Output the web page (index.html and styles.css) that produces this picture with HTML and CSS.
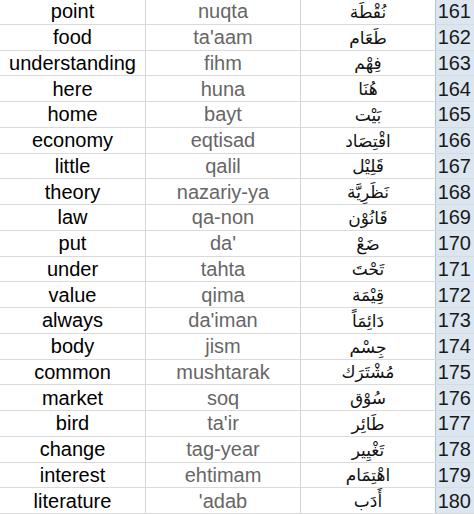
FILE: index.html
```html
<!DOCTYPE html>
<html>
<head>
<meta charset="utf-8">
<link rel="stylesheet" href="styles.css">
</head>
<body>
<div class="sheet">
  <div class="row"><div class="en">point</div><div class="tr">nuqta</div><div class="ar">نُقْطَة</div><div class="num">161</div></div>
  <div class="row"><div class="en">food</div><div class="tr">ta'aam</div><div class="ar">طَعَام</div><div class="num">162</div></div>
  <div class="row"><div class="en">understanding</div><div class="tr">fihm</div><div class="ar">فِهْم</div><div class="num">163</div></div>
  <div class="row"><div class="en">here</div><div class="tr">huna</div><div class="ar">هُنَا</div><div class="num">164</div></div>
  <div class="row"><div class="en">home</div><div class="tr">bayt</div><div class="ar">بَيْت</div><div class="num">165</div></div>
  <div class="row"><div class="en">economy</div><div class="tr">eqtisad</div><div class="ar">اقْتِصَاد</div><div class="num">166</div></div>
  <div class="row"><div class="en">little</div><div class="tr">qalil</div><div class="ar">قَلِيْل</div><div class="num">167</div></div>
  <div class="row"><div class="en">theory</div><div class="tr">nazariy-ya</div><div class="ar">نَظَرِيَّة</div><div class="num">168</div></div>
  <div class="row"><div class="en">law</div><div class="tr">qa-non</div><div class="ar">قَانُوْن</div><div class="num">169</div></div>
  <div class="row"><div class="en">put</div><div class="tr">da'</div><div class="ar">ضَعْ</div><div class="num">170</div></div>
  <div class="row"><div class="en">under</div><div class="tr">tahta</div><div class="ar">تَحْتَ</div><div class="num">171</div></div>
  <div class="row"><div class="en">value</div><div class="tr">qima</div><div class="ar">قِيْمَة</div><div class="num">172</div></div>
  <div class="row"><div class="en">always</div><div class="tr">da'iman</div><div class="ar">دَائِمَاً</div><div class="num">173</div></div>
  <div class="row"><div class="en">body</div><div class="tr">jism</div><div class="ar">جِسْم</div><div class="num">174</div></div>
  <div class="row"><div class="en">common</div><div class="tr">mushtarak</div><div class="ar">مُشْتَرَك</div><div class="num">175</div></div>
  <div class="row"><div class="en">market</div><div class="tr">soq</div><div class="ar">سُوْق</div><div class="num">176</div></div>
  <div class="row"><div class="en">bird</div><div class="tr">ta'ir</div><div class="ar">طَائِر</div><div class="num">177</div></div>
  <div class="row"><div class="en">change</div><div class="tr">tag-year</div><div class="ar">تَغْيِير</div><div class="num">178</div></div>
  <div class="row"><div class="en">interest</div><div class="tr">ehtimam</div><div class="ar">اهْتِمَام</div><div class="num">179</div></div>
  <div class="row"><div class="en">literature</div><div class="tr">'adab</div><div class="ar">أَدَب</div><div class="num">180</div></div>
</div>
</body>
</html>
```
FILE: styles.css
```css
html, body {
  margin: 0;
  padding: 0;
  background: #ffffff;
  overflow: hidden;
}
.sheet {
  margin-top: -1px;
  display: flex;
  flex-direction: column;
  font-family: "Liberation Sans", Arial, sans-serif;
}
.row {
  display: grid;
  grid-template-columns: 146px 155px 135px 38px;
  height: 25.75px;
  border-bottom: 1px solid #dadada;
  box-sizing: border-box;
}
.row > div {
  display: flex;
  align-items: center;
  justify-content: center;
  white-space: nowrap;
  overflow: hidden;
  padding-top: 1px;
}
.en {
  color: #000;
  font-size: 20px;
  border-right: 1px solid #d4d4d4;
}
.tr {
  color: #666666;
  font-size: 20px;
  border-right: 1px solid #d4d4d4;
}
.ar {
  color: #111;
  font-family: "DejaVu Sans", sans-serif;
  font-size: 17px;
  direction: rtl;
  border-right: 1px solid #b3c3d6;
}
.num {
  background: #dce6f1;
  color: #1a1a1a;
  font-size: 20px;
  justify-content: flex-end !important;
  padding-right: 3px;
}
```
